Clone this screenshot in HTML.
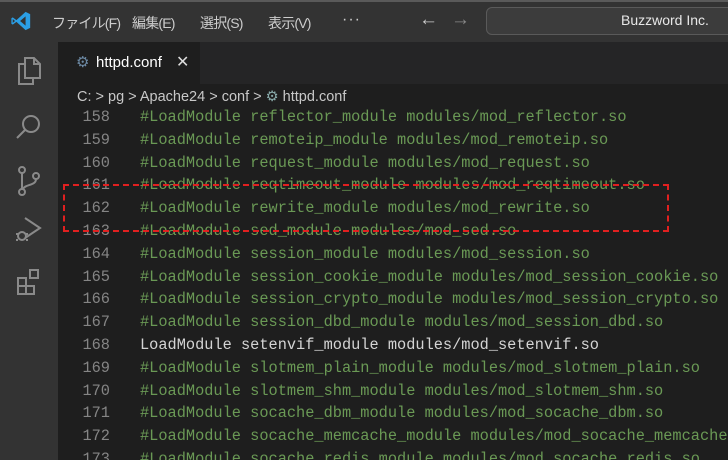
<!DOCTYPE html>
<html><head><meta charset="utf-8"><style>
*{margin:0;padding:0;box-sizing:border-box}
html,body{width:728px;height:460px;overflow:hidden}
body{background:#1e1e1e;font-family:"Liberation Sans","Noto Sans CJK JP",sans-serif;position:relative}
.title{position:absolute;left:0;top:0;width:728px;height:42px;background:#333333;border-top:2px solid #5a5a5a}
.menu{position:absolute;top:11px;color:#cccccc;font-size:14px;letter-spacing:-0.8px;white-space:nowrap}
.act{position:absolute;left:0;top:42px;width:58px;height:418px;background:#333333}
.tabs{position:absolute;left:58px;top:42px;width:670px;height:42px;background:#252526}
.tab{position:absolute;left:0;top:0;width:142px;height:42px;background:#1e1e1e}
.crumb{position:absolute;left:58px;top:84px;width:670px;height:26px;background:#1e1e1e;color:#c8c8c8;font-size:14.5px}
.code{position:absolute;left:58px;top:106px;width:670px;font-family:"Liberation Mono",monospace;font-size:15.3px}
.l{height:22.8px;line-height:22.8px;white-space:pre;position:relative}
.n{position:absolute;left:0;width:52px;text-align:right;color:#858585}
.t{position:absolute;left:82px;color:#6a9955}
.w{color:#d4d4d4}
.box{position:absolute;left:63px;top:184px;width:606px;height:48px;border:2px dashed #e02020}
</style></head><body>
<div class="title">
<svg style="position:absolute;left:10px;top:8px" width="22" height="22" viewBox="0 0 24 24"><path d="M17 2 L22 4.5 V19.5 L17 22 L7 13 L3 16 L1.5 15 V9 L3 8 L7 11 Z M17 7 L11 12 L17 17 Z M3 10 V14 L5.5 12 Z" fill="#2b9fe6" fill-rule="evenodd"/></svg>
<span class="menu" style="left:52px">ファイル(F)</span>
<span class="menu" style="left:132px">編集(E)</span>
<span class="menu" style="left:200px">選択(S)</span>
<span class="menu" style="left:268px">表示(V)</span>
<span class="menu" style="left:342px;top:9px;font-size:16px;letter-spacing:1px">···</span>
<span class="menu" style="left:419px;top:7px;font-size:19px;color:#ccc">←</span>
<span class="menu" style="left:451px;top:7px;font-size:19px;color:#888">→</span>
<div style="position:absolute;left:486px;top:5px;width:250px;height:28px;border:1px solid #5a5a5a;border-radius:6px;background:#3c3c3c"></div>
<span class="menu" style="left:621px;top:10px;color:#e8e8e8;font-size:14px;letter-spacing:0">Buzzword Inc.</span>
</div>
<div class="act">
<svg style="position:absolute;left:15px;top:14px" width="28" height="260" viewBox="0 0 28 260" fill="none" stroke="#8a8a8a" stroke-width="2">
<path d="M10 2 H19 L25 8 V22 H10 Z M19 2 V8 H25 M10 8 H4 V28 H18 V22"/>
<circle cx="16" cy="68" r="8"/><path d="M10 74 L2 82"/>
<circle cx="7" cy="114" r="3"/><circle cx="7" cy="136" r="3"/><circle cx="21" cy="120" r="3"/><path d="M7 117 V133 M21 123 C21 130 10 128 8 133"/>
<path d="M10 162 L25 172 L10 182"/><circle cx="7" cy="180" r="4"/><path d="M1 178 H3 M11 178 H13 M1 184 H3 M11 184 H13"/>
<path d="M3 222 H11 V230 H3 Z M3 230 V238 H11 V230 H19 V238 H11 M15 214 H23 V222 H15 Z"/>
</svg>
</div>
<div class="tabs"><div class="tab">
<span style="position:absolute;left:18px;top:11px;color:#6d8aa5;font-size:15px">⚙</span>
<span style="position:absolute;left:38px;top:12px;color:#fff;font-size:15px">httpd.conf</span>
<span style="position:absolute;left:118px;top:10px;color:#ddd;font-size:16px">✕</span>
</div></div>
<div class="crumb"><span style="position:absolute;left:19px;top:5px">C: &gt; pg &gt; Apache24 &gt; conf &gt; <span style="color:#8aa">⚙</span> httpd.conf</span></div>
<div class="code">
<div class="l"><span class="n">158</span><span class="t">#LoadModule reflector_module modules/mod_reflector.so</span></div>
<div class="l"><span class="n">159</span><span class="t">#LoadModule remoteip_module modules/mod_remoteip.so</span></div>
<div class="l"><span class="n">160</span><span class="t">#LoadModule request_module modules/mod_request.so</span></div>
<div class="l"><span class="n">161</span><span class="t">#LoadModule reqtimeout_module modules/mod_reqtimeout.so</span></div>
<div class="l"><span class="n">162</span><span class="t">#LoadModule rewrite_module modules/mod_rewrite.so</span></div>
<div class="l"><span class="n">163</span><span class="t">#LoadModule sed_module modules/mod_sed.so</span></div>
<div class="l"><span class="n">164</span><span class="t">#LoadModule session_module modules/mod_session.so</span></div>
<div class="l"><span class="n">165</span><span class="t">#LoadModule session_cookie_module modules/mod_session_cookie.so</span></div>
<div class="l"><span class="n">166</span><span class="t">#LoadModule session_crypto_module modules/mod_session_crypto.so</span></div>
<div class="l"><span class="n">167</span><span class="t">#LoadModule session_dbd_module modules/mod_session_dbd.so</span></div>
<div class="l"><span class="n">168</span><span class="t w">LoadModule setenvif_module modules/mod_setenvif.so</span></div>
<div class="l"><span class="n">169</span><span class="t">#LoadModule slotmem_plain_module modules/mod_slotmem_plain.so</span></div>
<div class="l"><span class="n">170</span><span class="t">#LoadModule slotmem_shm_module modules/mod_slotmem_shm.so</span></div>
<div class="l"><span class="n">171</span><span class="t">#LoadModule socache_dbm_module modules/mod_socache_dbm.so</span></div>
<div class="l"><span class="n">172</span><span class="t">#LoadModule socache_memcache_module modules/mod_socache_memcache.so</span></div>
<div class="l"><span class="n">173</span><span class="t">#LoadModule socache_redis_module modules/mod_socache_redis.so</span></div>
</div>
<div class="box"></div>
</body></html>
